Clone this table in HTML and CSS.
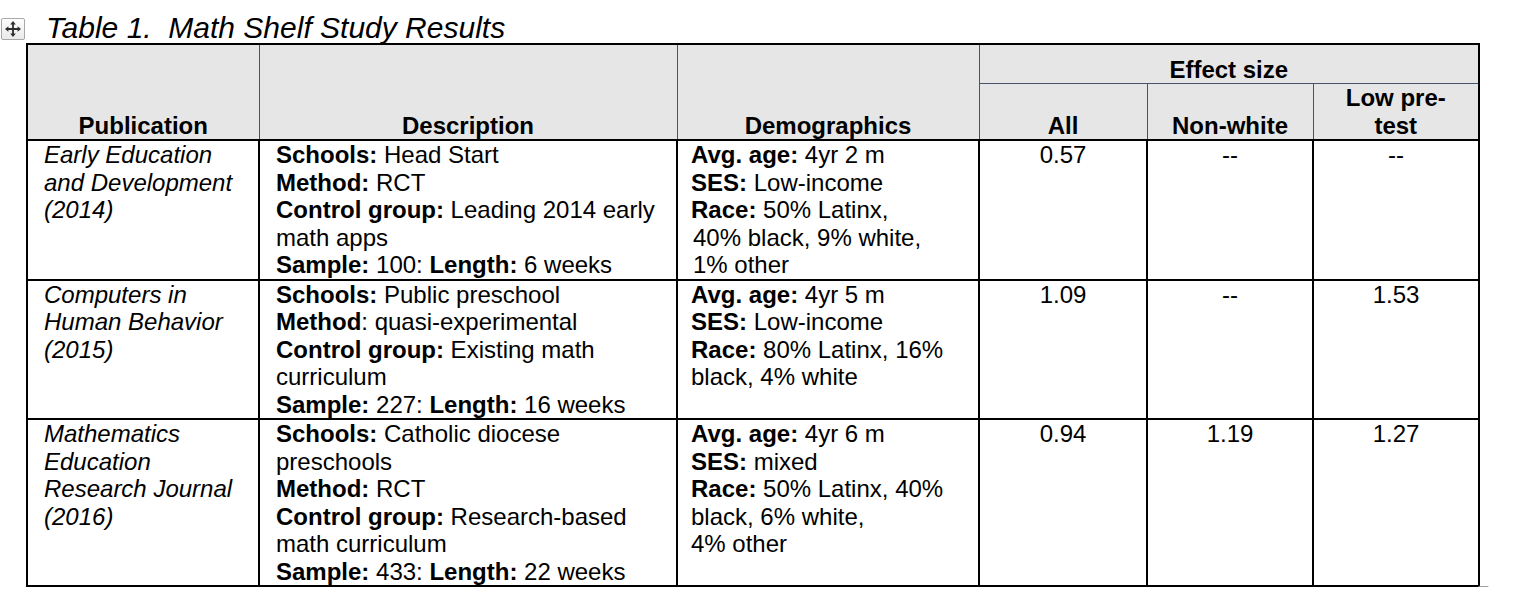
FILE: index.html
```html
<!DOCTYPE html>
<html lang="en">
<head>
<meta charset="utf-8">
<title>Table 1. Math Shelf Study Results</title>
<link rel="stylesheet" href="styles.css">
</head>
<body>
<div class="page">
  <div class="caption-row">
    <span class="move-handle" aria-hidden="true">
      <svg width="24" height="22" viewBox="0 0 24 22">
        <defs>
          <linearGradient id="mg" x1="0" y1="0" x2="0" y2="1">
            <stop offset="0" stop-color="#fefefe"/>
            <stop offset="1" stop-color="#e9e9e9"/>
          </linearGradient>
        </defs>
        <rect x="0.5" y="0.5" width="23" height="21" rx="1.5" fill="url(#mg)" stroke="#a8a8a8"/>
        <path d="M12 5.5 V16.5 M6 11 H18" stroke="#2e2e2e" stroke-width="1.8" fill="none"/>
        <path d="M12 3 L9.2 6.4 H14.8 Z M12 19 L9.2 15.6 H14.8 Z M4 11 L7.4 8.2 V13.8 Z M20 11 L16.6 8.2 V13.8 Z" fill="#2e2e2e"/>
      </svg>
    </span>
    <h1 class="title">Table 1.&nbsp; Math Shelf Study Results</h1>
  </div>
  <div class="table-wrap">
    <table class="results">
      <colgroup>
        <col class="c-pub">
        <col class="c-desc">
        <col class="c-demo">
        <col class="c-all">
        <col class="c-nw">
        <col class="c-low">
      </colgroup>
      <thead>
        <tr>
          <th rowspan="2">Publication</th>
          <th rowspan="2">Description</th>
          <th rowspan="2">Demographics</th>
          <th colspan="3" class="group">Effect size</th>
        </tr>
        <tr class="sub">
          <th>All</th>
          <th>Non-white</th>
          <th>Low pre-<br>test</th>
        </tr>
      </thead>
      <tbody>
        <tr>
          <td class="pub">Early Education<br>and Development<br>(2014)</td>
          <td class="desc"><b>Schools:</b> Head Start<br><b>Method:</b> RCT<br><b>Control group:</b> Leading 2014 early<br>math apps<br><b>Sample:</b> 100: <b>Length:</b> 6 weeks</td>
          <td class="demo"><b>Avg. age:</b> 4yr 2 m<br><b>SES:</b> Low-income<br><b>Race:</b> 50% Latinx,<br><span class="ind">40% black, 9% white,</span><br><span class="ind">1% other</span></td>
          <td class="num">0.57</td>
          <td class="num">--</td>
          <td class="num">--</td>
        </tr>
        <tr>
          <td class="pub">Computers in<br>Human Behavior<br>(2015)</td>
          <td class="desc"><b>Schools:</b> Public preschool<br><b>Method</b>: quasi-experimental<br><b>Control group:</b> Existing math<br>curriculum<br><b>Sample:</b> 227: <b>Length:</b> 16 weeks</td>
          <td class="demo"><b>Avg. age:</b> 4yr 5 m<br><b>SES:</b> Low-income<br><b>Race:</b> 80% Latinx, 16%<br>black, 4% white</td>
          <td class="num">1.09</td>
          <td class="num">--</td>
          <td class="num">1.53</td>
        </tr>
        <tr>
          <td class="pub">Mathematics<br>Education<br>Research Journal<br>(2016)</td>
          <td class="desc"><b>Schools:</b> Catholic diocese<br>preschools<br><b>Method:</b> RCT<br><b>Control group:</b> Research-based<br>math curriculum<br><b>Sample:</b> 433: <b>Length:</b> 22 weeks</td>
          <td class="demo"><b>Avg. age:</b> 4yr 6 m<br><b>SES:</b> mixed<br><b>Race:</b> 50% Latinx, 40%<br>black, 6% white,<br>4% other</td>
          <td class="num">0.94</td>
          <td class="num">1.19</td>
          <td class="num">1.27</td>
        </tr>
      </tbody>
    </table>
    <div class="resize-handle" aria-hidden="true"></div>
  </div>
</div>
</body>
</html>
```

FILE: styles.css
```css
html, body {
  margin: 0;
  padding: 0;
  background: #ffffff;
}

body {
  font-family: "Liberation Sans", Arial, sans-serif;
  color: #000000;
}

.page {
  width: 1538px;
}

.caption-row {
  display: flex;
  align-items: flex-start;
  height: 43px;
}

.move-handle {
  display: block;
  flex-shrink: 0;
  width: 24px;
  height: 22px;
  margin-left: 1px;
  margin-top: 18px;
}

.move-handle svg {
  display: block;
}

.title {
  margin: 12px 0 0 21px;
  font-size: 30px;
  line-height: 31px;
  font-style: italic;
  font-weight: normal;
  white-space: nowrap;
}

.table-wrap {
  position: relative;
  width: 1454px;
  margin-left: 26px;
}

.results {
  border-collapse: collapse;
  table-layout: fixed;
  width: 1454px;
  border: 2px solid #000000;
  font-size: 24px;
  line-height: 27.5px;
}

.c-pub { width: 232px; }
.c-desc { width: 418px; }
.c-demo { width: 302px; }
.c-all { width: 168px; }
.c-nw { width: 166px; }
.c-low { width: 166px; }

.results th {
  background: #e6e6e6;
  border: 1px solid #44546a;
  font-weight: bold;
  text-align: center;
  vertical-align: bottom;
  padding: 0 4px;
}

.results th.group {
  height: 38px;
}

.results td {
  border: 2px solid #000000;
  vertical-align: top;
  padding: 0 4px 0 16px;
  white-space: nowrap;
}

.results td.pub {
  font-style: italic;
}

.results td.demo {
  padding-left: 13px;
}

.results td.demo .ind {
  padding-left: 2px;
}

.results td.num {
  text-align: center;
  padding: 0 4px;
}

.resize-handle {
  position: absolute;
  z-index: 2;
  left: 1452px;
  top: 100%;
  width: 7px;
  height: 6px;
  margin-top: -1px;
  border: 2px solid #a0a0a0;
  border-radius: 2px;
  background: #f6f6f6;
}
```
